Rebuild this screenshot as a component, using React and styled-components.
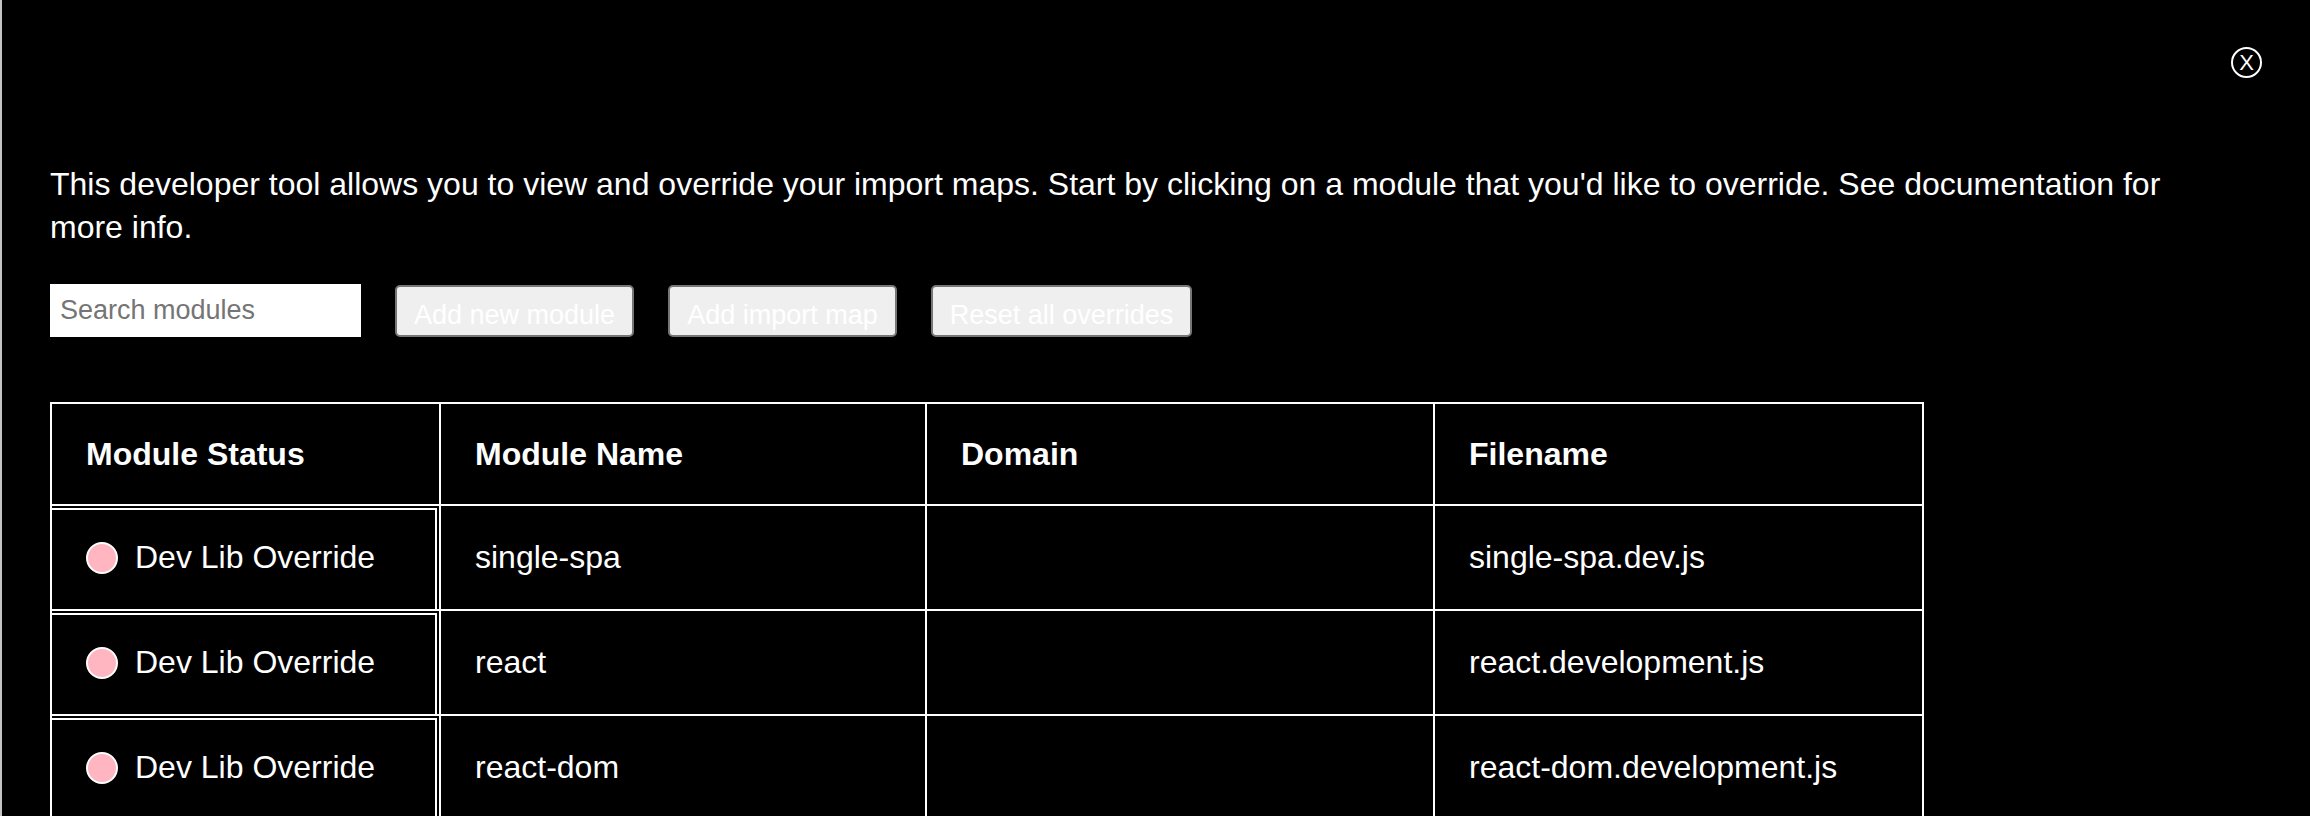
import styled, { createGlobalStyle } from 'styled-components';

const modules = [
  { status: 'Dev Lib Override', name: 'single-spa', domain: '', file: 'single-spa.dev.js' },
  { status: 'Dev Lib Override', name: 'react', domain: '', file: 'react.development.js' },
  { status: 'Dev Lib Override', name: 'react-dom', domain: '', file: 'react-dom.development.js' },
];

const GlobalStyle = createGlobalStyle`
  html, body {
    margin: 0;
    background: #000;
  }
  body {
    font-family: "Liberation Sans", Arial, Helvetica, sans-serif;
    color: #fff;
    overflow: hidden;
  }
`;

const App = () => {
  return (
    <>
      <GlobalStyle />
      <Page>
        <CloseButton aria-label="Close">X</CloseButton>
        <Intro>
          This developer tool allows you to view and override your import maps. Start by clicking on a module that
          you'd like to override. See documentation for more info.
        </Intro>
        <Toolbar>
          <SearchInput placeholder="Search modules" />
          <ActionButton>Add new module</ActionButton>
          <ActionButton>Add import map</ActionButton>
          <ActionButton>Reset all overrides</ActionButton>
        </Toolbar>
        <ModuleTable>
          <thead>
            <tr>
              <HeadCell $width={389}>Module Status</HeadCell>
              <HeadCell $width={486}>Module Name</HeadCell>
              <HeadCell $width={508}>Domain</HeadCell>
              <HeadCell $width={489}>Filename</HeadCell>
            </tr>
          </thead>
          <tbody>
            {modules.map((m) => (
              <tr key={m.name}>
                <StatusCell>
                  <StatusWrap>
                    <StatusDot />
                    {m.status}
                  </StatusWrap>
                </StatusCell>
                <Cell>{m.name}</Cell>
                <Cell>{m.domain}</Cell>
                <Cell>{m.file}</Cell>
              </tr>
            ))}
          </tbody>
        </ModuleTable>
      </Page>
    </>
  );
};

const Page = styled.div`
  position: relative;
  min-height: 100vh;
  box-sizing: border-box;
  border-left: 2px solid #c4c4c4;
  padding: 163px 110px 0 48px;
  background: #000;
`;

const CloseButton = styled.button`
  position: absolute;
  top: 47px;
  right: 48px;
  width: 31px;
  height: 31px;
  box-sizing: border-box;
  border: 2px solid #fff;
  border-radius: 50%;
  background: transparent;
  color: #fff;
  padding: 0;
  display: flex;
  align-items: center;
  justify-content: center;
  font-family: "Liberation Sans", Arial, sans-serif;
  font-size: 22px;
  line-height: 1;
  cursor: pointer;
`;

const Intro = styled.p`
  margin: 0;
  width: 2150px;
  font-size: 32px;
  line-height: 43px;
`;

const Toolbar = styled.div`
  display: flex;
  align-items: center;
  gap: 34px;
  margin-top: 35px;
`;

const SearchInput = styled.input`
  width: 311px;
  height: 53px;
  box-sizing: border-box;
  border: none;
  padding: 0 10px;
  font-family: "Liberation Sans", Arial, sans-serif;
  font-size: 27px;
  color: #000;
  background: #fff;
  outline: none;

  &::placeholder {
    color: #757575;
  }
`;

const ActionButton = styled.button`
  height: 52px;
  box-sizing: border-box;
  padding: 10px 17px 0;
  border: 2px solid #767676;
  border-radius: 5px;
  background: #efefef;
  color: #fff;
  font-family: "Liberation Sans", Arial, sans-serif;
  font-size: 27px;
  line-height: 1;
  cursor: pointer;
`;

const ModuleTable = styled.table`
  margin-top: 65px;
  border-collapse: collapse;
  border: 2px solid #fff;
  font-size: 32px;
`;

const HeadCell = styled.th`
  width: ${(p) => p.$width}px;
  height: 102px;
  box-sizing: border-box;
  padding: 0 34px;
  border: 2px solid #fff;
  text-align: left;
  font-weight: 700;
  vertical-align: middle;
`;

const Cell = styled.td`
  height: 105px;
  box-sizing: border-box;
  padding: 0 34px;
  border: 2px solid #fff;
  vertical-align: middle;
  white-space: nowrap;
`;

/* the status cell draws its own box, nudged in from the top and right */
const StatusCell = styled(Cell)`
  box-shadow: inset -2px 2px 0 #000, inset -4px 4px 0 #fff;
`;

const StatusWrap = styled.div`
  display: flex;
  align-items: center;
  gap: 17px;
`;

const StatusDot = styled.span`
  width: 32px;
  height: 32px;
  box-sizing: border-box;
  border-radius: 50%;
  background: #ffb6c1;
  border: 2px solid #fff;
  flex-shrink: 0;
`;

export default App;
